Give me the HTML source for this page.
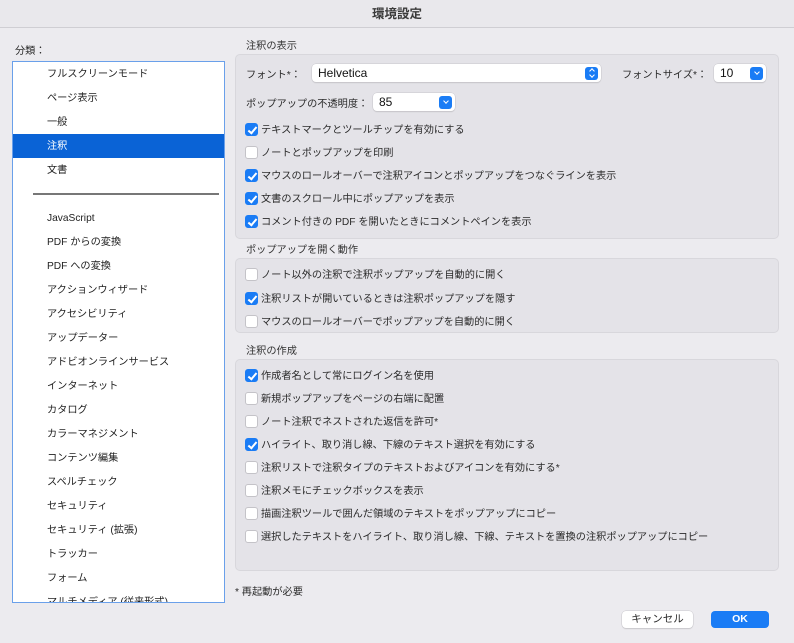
<!DOCTYPE html>
<html><head><meta charset="utf-8"><style>
*{margin:0;padding:0;box-sizing:border-box}
body{width:794px;height:643px;background:#ecebef;font-family:"Liberation Sans","Noto Sans CJK JP",sans-serif;font-size:10.2px;color:#2a2a2a;position:relative;overflow:hidden}
.a{position:absolute;white-space:nowrap}
.title{left:0;top:0;width:794px;height:28px;border-bottom:1px solid #cfced3;background:#e9e8ec;text-align:center;line-height:28px;font-size:12.5px;font-weight:bold;color:#3a3a3a}
.list{left:12px;top:61px;width:213px;height:542px;background:#fff;border:1px solid #6aa0ea;overflow:hidden}
.li{position:absolute;left:34px;line-height:14px;color:#222}
.sel{position:absolute;left:0;top:72px;width:211px;height:24px;background:#0a63d6}
.box{position:absolute;left:235px;width:544px;background:#e4e3e8;border:1px solid #d8d7dc;border-radius:5px}
.cb{position:absolute;left:245px;width:13px;height:13px;border-radius:3px;background:#fff;border:1px solid #c4c3c8}
.cb.on{background:#1a7cf5;border-color:#1a7cf5}
.cb.on:after{content:"";position:absolute;left:3.5px;top:0.5px;width:3px;height:7px;border:solid #fff;border-width:0 2px 2px 0;transform:rotate(40deg)}
.t{position:absolute;left:261px;line-height:14px;white-space:nowrap}
.sect{position:absolute;left:246px;line-height:14px;color:#333}
.pop{position:absolute;height:18px;background:#fff;border-radius:4px;box-shadow:0 0 0 .5px #c8c7cc,0 1px 1px rgba(0,0,0,.15);line-height:18px;padding-left:6px;font-size:12px;color:#111}
.pop i{position:absolute;right:3px;top:2.5px;width:13px;height:13px;border-radius:3px;background:#1a7cf5}
.pop i:after{content:"";position:absolute;left:4.5px;top:3px;width:3px;height:3px;border:solid #fff;border-width:0 1.5px 1.5px 0;transform:rotate(45deg)}
.pop i.ud:after{top:6px}
.pop i.ud:before{content:"";position:absolute;left:4.5px;top:2.5px;width:3px;height:3px;border:solid #fff;border-width:1.5px 0 0 1.5px;transform:rotate(45deg)}
.btn{position:absolute;top:611px;height:17px;border-radius:4px;text-align:center;line-height:17px;font-size:10.5px}
</style></head><body>
<div class="a title">環境設定</div>
<div class="a" style="left:15px;top:42px">分類：</div>
<div class="a list">
<div class="sel"></div>
<div class="li" style="top:6px">フルスクリーンモード</div>
<div class="li" style="top:30px">ページ表示</div>
<div class="li" style="top:54px">一般</div>
<div class="li" style="top:78px;color:#fff">注釈</div>
<div class="li" style="top:102px">文書</div>
<div style="position:absolute;left:20px;top:131px;width:186px;height:2px;background:#777"></div>
<div class="li" style="top:150px">JavaScript</div>
<div class="li" style="top:174px">PDF からの変換</div>
<div class="li" style="top:198px">PDF への変換</div>
<div class="li" style="top:222px">アクションウィザード</div>
<div class="li" style="top:246px">アクセシビリティ</div>
<div class="li" style="top:270px">アップデーター</div>
<div class="li" style="top:294px">アドビオンラインサービス</div>
<div class="li" style="top:318px">インターネット</div>
<div class="li" style="top:342px">カタログ</div>
<div class="li" style="top:366px">カラーマネジメント</div>
<div class="li" style="top:390px">コンテンツ編集</div>
<div class="li" style="top:414px">スペルチェック</div>
<div class="li" style="top:438px">セキュリティ</div>
<div class="li" style="top:462px">セキュリティ (拡張)</div>
<div class="li" style="top:486px">トラッカー</div>
<div class="li" style="top:510px">フォーム</div>
<div class="li" style="top:534px">マルチメディア (従来形式)</div>
</div>

<div class="sect" style="top:40px">注釈の表示</div>
<div class="box" style="top:54px;height:185px"></div>
<div class="a" style="left:246px;top:66px">フォント*：</div>
<div class="pop" style="left:312px;top:64px;width:289px">Helvetica<i class="ud"></i></div>
<div class="a" style="left:622px;top:66px">フォントサイズ*：</div>
<div class="pop" style="left:714px;top:64px;width:52px">10<i></i></div>
<div class="a" style="left:246px;top:95px">ポップアップの不透明度：</div>
<div class="pop" style="left:373px;top:93px;width:82px">85<i></i></div>
<div class="cb on" style="top:123px"></div><div class="t" style="top:123.5px">テキストマークとツールチップを有効にする</div>
<div class="cb" style="top:146px"></div><div class="t" style="top:146.5px">ノートとポップアップを印刷</div>
<div class="cb on" style="top:169px"></div><div class="t" style="top:169.5px">マウスのロールオーバーで注釈アイコンとポップアップをつなぐラインを表示</div>
<div class="cb on" style="top:192px"></div><div class="t" style="top:192.5px">文書のスクロール中にポップアップを表示</div>
<div class="cb on" style="top:215px"></div><div class="t" style="top:215.5px">コメント付きの PDF を開いたときにコメントペインを表示</div>

<div class="sect" style="top:244px">ポップアップを開く動作</div>
<div class="box" style="top:258px;height:75px"></div>
<div class="cb" style="top:268px"></div><div class="t" style="top:268.5px">ノート以外の注釈で注釈ポップアップを自動的に開く</div>
<div class="cb on" style="top:292px"></div><div class="t" style="top:292.5px">注釈リストが開いているときは注釈ポップアップを隠す</div>
<div class="cb" style="top:315px"></div><div class="t" style="top:315.5px">マウスのロールオーバーでポップアップを自動的に開く</div>

<div class="sect" style="top:345px">注釈の作成</div>
<div class="box" style="top:359px;height:212px"></div>
<div class="cb on" style="top:369px"></div><div class="t" style="top:369.5px">作成者名として常にログイン名を使用</div>
<div class="cb" style="top:392px"></div><div class="t" style="top:392.5px">新規ポップアップをページの右端に配置</div>
<div class="cb" style="top:415px"></div><div class="t" style="top:415.5px">ノート注釈でネストされた返信を許可*</div>
<div class="cb on" style="top:438px"></div><div class="t" style="top:438.5px">ハイライト、取り消し線、下線のテキスト選択を有効にする</div>
<div class="cb" style="top:461px"></div><div class="t" style="top:461.5px">注釈リストで注釈タイプのテキストおよびアイコンを有効にする*</div>
<div class="cb" style="top:484px"></div><div class="t" style="top:484.5px">注釈メモにチェックボックスを表示</div>
<div class="cb" style="top:507px"></div><div class="t" style="top:507.5px">描画注釈ツールで囲んだ領域のテキストをポップアップにコピー</div>
<div class="cb" style="top:530px"></div><div class="t" style="top:530.5px">選択したテキストをハイライト、取り消し線、下線、テキストを置換の注釈ポップアップにコピー</div>

<div class="a" style="left:235px;top:583px">* 再起動が必要</div>
<div class="btn" style="left:622px;width:71px;background:#fff;box-shadow:0 0 0 .5px #c8c7cc,0 1px 1px rgba(0,0,0,.15)">キャンセル</div>
<div class="btn" style="left:711px;width:58px;background:#1a7cf5;color:#fff;font-weight:bold">OK</div>
</body></html>
